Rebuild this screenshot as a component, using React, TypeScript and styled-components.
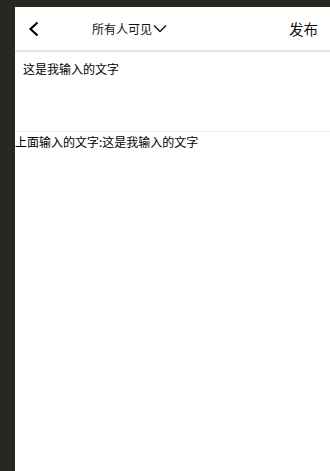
import React from "react";
import styled, { createGlobalStyle } from "styled-components";

const Global = createGlobalStyle`
  html, body { margin: 0; padding: 0; height: 100%; background: #272822; }
  #root { height: 100%; }
  * { box-sizing: border-box; }
`;

const Frame = styled.div`
  height: 100%;
  padding: 7px 0 0 15px;
`;

const Page = styled.div`
  height: 100%;
  background: #fff;
  font-family: "Noto Sans CJK SC", "Noto Sans", sans-serif;
  color: #000;
  display: flex;
  flex-direction: column;
`;

const Header = styled.header`
  height: 45px;
  border-bottom: 2px solid #e6e6e6;
  display: flex;
  align-items: center;
  padding: 0 12px 0 13px;
`;

const BackButton = styled.button`
  background: none;
  border: 0;
  padding: 0;
  display: flex;
  align-items: center;
  cursor: pointer;
`;

const Title = styled.div`
  display: flex;
  align-items: center;
  gap: 1px;
  font-size: 12px;
  color: #111;
  margin-left: 52px;
`;

const Publish = styled.div`
  margin-left: auto;
  font-size: 14.5px;
  color: #111;
`;

const Editor = styled.div`
  height: 80px;
  border-bottom: 1px solid #eee;
  padding: 9px 8px;
  font-size: 12px;
  line-height: 16px;
`;

const Echo = styled.div`
  font-size: 12px;
  line-height: 16px;
  padding-top: 2px;
`;

export default function App() {
  return (
    <>
      <Global />
      <Frame>
        <Page>
          <Header>
            <BackButton aria-label="返回">
              <svg width="12" height="16" viewBox="0 0 12 16">
                <path d="M9.5 1.5 L2.5 8 L9.5 14.5" fill="none" stroke="#000" strokeWidth="2.2" />
              </svg>
            </BackButton>
            <Title>
              所有人可见
              <svg width="14" height="9" viewBox="0 0 14 9">
                <path d="M1 1.5 L7 7.5 L13 1.5" fill="none" stroke="#111" strokeWidth="1.4" />
              </svg>
            </Title>
            <Publish>发布</Publish>
          </Header>
          <Editor>这是我输入的文字</Editor>
          <Echo>上面输入的文字:这是我输入的文字</Echo>
        </Page>
      </Frame>
    </>
  );
}
